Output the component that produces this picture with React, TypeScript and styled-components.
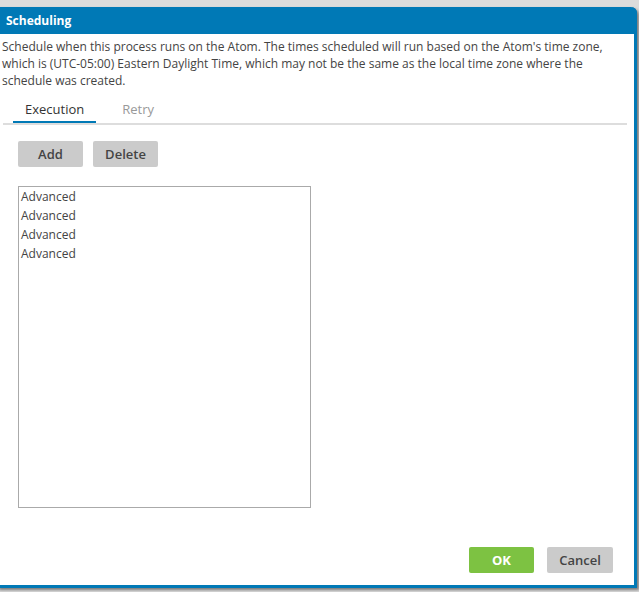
import React from "react";
import styled, { createGlobalStyle } from "styled-components";

const GlobalStyle = createGlobalStyle`
  html, body {
    margin: 0;
    padding: 0;
    background: #dcdcdc;
    font-family: "Open Sans", "Liberation Sans", sans-serif;
    overflow: hidden;
  }
`;

const items = ["Advanced", "Advanced", "Advanced", "Advanced"];

const App: React.FC = () => {
  return (
    <Page>
      <GlobalStyle />
      <Dialog>
        <Header>Scheduling</Header>
        <Body>
          <Description>
            Schedule when this process runs on the Atom. The times scheduled
            will run based on the Atom's time zone, which is (UTC-05:00)
            Eastern Daylight Time, which may not be the same as the local time
            zone where the schedule was created.
          </Description>
          <TabBar>
            <Tab active>Execution</Tab>
            <Tab>Retry</Tab>
          </TabBar>
          <Toolbar>
            <Button>Add</Button>
            <Button>Delete</Button>
          </Toolbar>
          <ScheduleList>
            {items.map((item, i) => (
              <ListItem key={i}>{item}</ListItem>
            ))}
          </ScheduleList>
        </Body>
        <Footer>
          <FooterButton primary>OK</FooterButton>
          <FooterButton>Cancel</FooterButton>
        </Footer>
      </Dialog>
    </Page>
  );
};

const Page = styled.div`
  padding-top: 7px;
  height: 592px;
  box-sizing: border-box;
`;

const Dialog = styled.div`
  display: flex;
  flex-direction: column;
  box-sizing: border-box;
  width: 640px;
  height: 581px;
  margin-left: -3px;
  background: #fff;
  border: 3px solid #0079b6;
  border-top: none;
  border-top-right-radius: 6px;
  box-shadow: 2px 2px 3px rgba(0, 0, 0, 0.45);
`;

const Header = styled.div`
  height: 27px;
  line-height: 27px;
  padding-left: 9px;
  margin: 0 -3px;
  background: #0079b6;
  border-top-right-radius: 6px;
  color: #fff;
  font-size: 12px;
  font-weight: 700;
`;

const Body = styled.div`
  flex: 1;
  display: flex;
  flex-direction: column;
`;

const Description = styled.div`
  padding: 4px 8px 0 2px;
  font-size: 12px;
  line-height: 17px;
  color: #444;
`;

const TabBar = styled.div`
  display: flex;
  gap: 14px;
  margin: 8px 7px 0 3px;
  padding-left: 10px;
  border-bottom: 2px solid #dddddd;
`;

const Tab = styled.div<{ active?: boolean }>`
  height: 24px;
  line-height: 24px;
  padding: 0 12px;
  font-size: 13px;
  color: ${({ active }) => (active ? "#333" : "#999")};
  border-bottom: 2px solid ${({ active }) => (active ? "#0079b6" : "transparent")};
`;

const Toolbar = styled.div`
  display: flex;
  gap: 10px;
  padding: 16px 0 0 18px;
`;

const Button = styled.button`
  width: 65px;
  height: 26px;
  padding: 0;
  border: none;
  border-radius: 2px;
  background: #cbcbcb;
  color: #444;
  font-family: inherit;
  font-size: 13px;
  font-weight: 600;
`;

const ScheduleList = styled.div`
  box-sizing: border-box;
  width: 293px;
  height: 322px;
  margin: 19px 0 0 18px;
  border: 1px solid #aaaaaa;
`;

const ListItem = styled.div`
  padding-left: 2px;
  font-size: 12px;
  line-height: 19px;
  color: #444;
`;

const Footer = styled.div`
  display: flex;
  justify-content: flex-end;
  gap: 13px;
  padding: 0 21px 12px 0;
`;

const FooterButton = styled.button<{ primary?: boolean }>`
  width: ${({ primary }) => (primary ? "65px" : "66px")};
  height: 26px;
  padding: 0;
  border: none;
  border-radius: 2px;
  background: ${({ primary }) => (primary ? "#7dc242" : "#cbcbcb")};
  color: ${({ primary }) => (primary ? "#fff" : "#444")};
  font-family: inherit;
  font-size: 13px;
  font-weight: ${({ primary }) => (primary ? 700 : 600)};
`;

export default App;
